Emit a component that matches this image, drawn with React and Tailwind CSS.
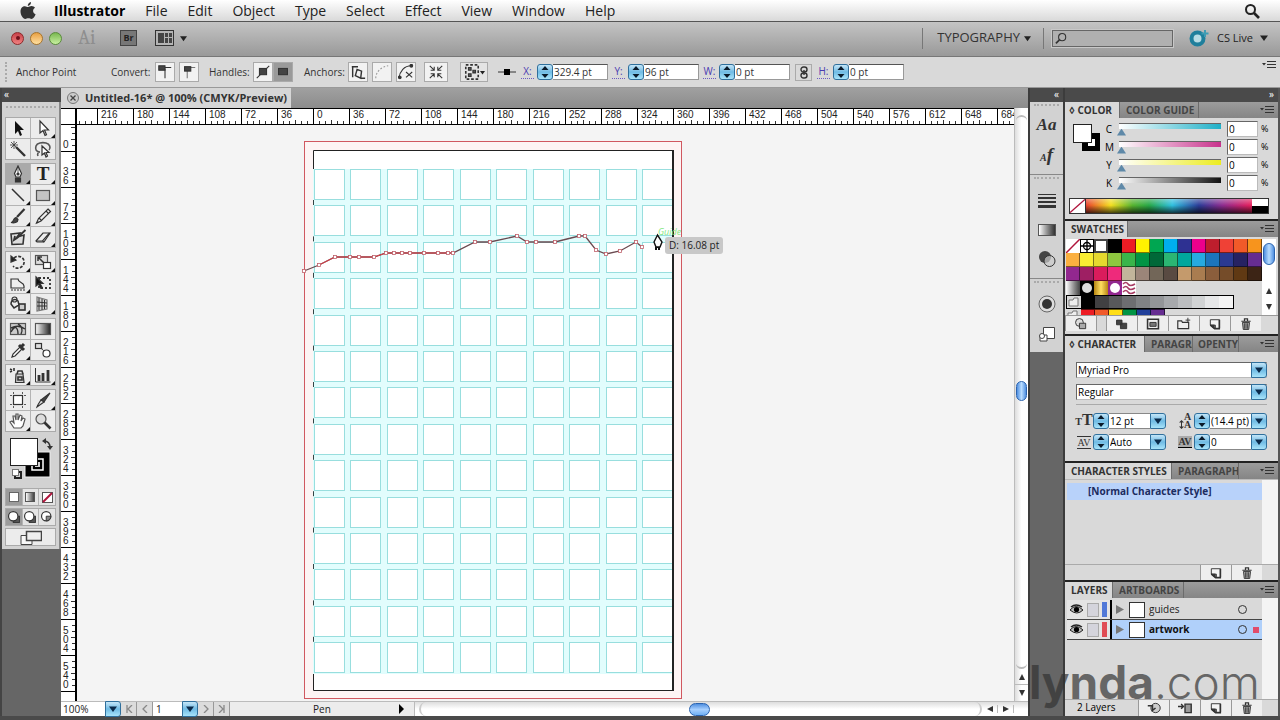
import React, { useState } from "react";

const menus = ["File", "Edit", "Object", "Type", "Select", "Effect", "View", "Window", "Help"];

const hRuler = [216, 180, 144, 108, 72, 36, 0, 36, 72, 108, 144, 180, 216, 252, 288, 324, 360, 396, 432, 468, 504, 540, 576, 612, 648, 684];
const vRuler = ["36", "72", "108", "144", "180", "216", "252", "288", "324", "360", "396", "432", "468", "504", "540"];

const gridCols = Array.from({ length: 10 }, (_, i) => Math.round(236.5 + i * 36.5));
const gridRows = Array.from({ length: 14 }, (_, i) => Math.round(44 + i * 36.4));

const anchors = [
  [227, 146], [242, 140], [258, 132], [273, 132], [282, 132], [297, 132], [309, 128], [317, 128], [325, 128],
  [333, 128], [347, 128], [361, 128], [371, 128], [376, 128], [398, 117], [413, 117], [440, 111], [450, 117],
  [459, 117], [478, 117], [502, 111], [508, 111], [519, 125], [529, 129], [543, 126], [559, 117], [565, 122],
];

const swatches = [
  "bg-black", "bg-[#ed1c24]", "bg-[#fff200]", "bg-[#00a651]", "bg-[#00aeef]", "bg-[#2e3192]", "bg-[#ec008c]",
  "bg-[#be1e2d]", "bg-[#ef4136]", "bg-[#f15a29]", "bg-[#f7941d]",
  "bg-[#fbb040]", "bg-[#f9ed32]", "bg-[#e6d92e]", "bg-[#8dc63f]", "bg-[#39b54a]", "bg-[#009444]", "bg-[#006838]",
  "bg-[#2bb673]", "bg-[#00a79d]", "bg-[#27aae1]", "bg-[#1c75bc]", "bg-[#2b3990]", "bg-[#262262]", "bg-[#662d91]",
  "bg-[#92278f]", "bg-[#9e1f63]", "bg-[#da1c5c]", "bg-[#ee2a7b]", "bg-[#c2b59b]", "bg-[#9b8579]", "bg-[#726658]",
  "bg-[#594a42]", "bg-[#c49a6c]", "bg-[#a97c50]", "bg-[#8b5e3c]", "bg-[#754c29]", "bg-[#603913]", "bg-[#3c2415]",
];

const grays = [
  "bg-black", "bg-[#414042]", "bg-[#58595b]", "bg-[#6d6e71]", "bg-[#808285]", "bg-[#939598]", "bg-[#a7a9ac]",
  "bg-[#bcbec0]", "bg-[#d1d3d4]", "bg-[#e6e7e8]", "bg-[#f4f4f4]",
];

const brights = ["bg-[#ed1c24]", "bg-[#f15a29]", "bg-[#ffde17]", "bg-[#009444]", "bg-[#21409a]", "bg-[#662d91]"];

const channels = [
  { name: "C", track: "bg-[linear-gradient(to_right,#fff,#1fb0c8)]" },
  { name: "M", track: "bg-[linear-gradient(to_right,#fff,#c8328c)]" },
  { name: "Y", track: "bg-[linear-gradient(to_right,#fff,#ecec20)]" },
  { name: "K", track: "bg-[linear-gradient(to_right,#fff,#111)]" },
];

/* ---------- icons ---------- */

const Icon = ({ size = 18, children }) => (
  <svg width={size} height={size} viewBox="0 0 18 18" fill="none" stroke="#333" strokeWidth="1.2" aria-hidden="true">
    {children}
  </svg>
);

const Down = ({ size = 7, color = "#222" }) => (
  <svg width={size} height={size} viewBox="0 0 8 8" fill={color} aria-hidden="true">
    <path d="M0 1.5h8L4 7z" />
  </svg>
);

const NewIcon = () => (
  <Icon size={14}>
    <path d="M3 3.500h12v11H9.500v-4H3z" fill="#f4f4f4" />
    <path d="M3 10.500l5.500 4.500H14.500V4" strokeWidth="2" />
    <path d="M3 10.500h5v4z" fill="#333" />
  </Icon>
);

const TrashIcon = () => (
  <Icon size={14}>
    <path d="M4.500 7h9l-1 9h-7z" fill="#aaa" />
    <path d="M3 5.500h12M7 5V2.500h4V5M7.500 8v7M10.500 8v7" strokeWidth="1.500" />
  </Icon>
);

const tools = {
  selection: <path d="M6 2v13l3-3 2 5 2-1-2-5h4z" fill="#111" stroke="none" />,
  direct: <path d="M6 2v12l3-2.500 2 5 1.500-.8-2-4.700h4z" fill="#fff" />,
  wand: (
    <>
      <path d="M7 7l9 9" strokeWidth="2.400" />
      <path d="M5 1v8M1 5h8M2 2l6 6M8 2L2 8" strokeWidth=".8" />
    </>
  ),
  lasso: (
    <>
      <path d="M6 12c-4 0-5-3-4-6s6-4 10-3 5 5 3 7M6 12c-2 0-3 2-2 4" strokeWidth="1.600" stroke="#555" />
      <path d="M8 6v9l2.500-2 1.500 4 1.500-1-1.500-3.500h3z" fill="#fff" />
    </>
  ),
  pen: (
    <>
      <path d="M9 1L5.500 8.500 7 12h4l1.500-3.500z" fill="#fff" />
      <path d="M9 2v6" strokeWidth=".8" />
      <path d="M6.500 13h5v4h-5z" fill="#333" />
      <circle cx="9" cy="9" r="1" fill="#333" />
    </>
  ),
  line: <path d="M3 3l12 12" strokeWidth="1.500" />,
  rect: <rect x="2.500" y="4.500" width="13" height="10" fill="#c4c4c4" stroke="#555" />,
  brush: (
    <>
      <path d="M15.500 2L8 10" strokeWidth="2.200" />
      <path d="M2 15.500c3 0 1.500-4 5-5l2 2c0 3-4 4-7 3z" fill="#444" />
    </>
  ),
  pencil: (
    <>
      <path d="M14 2l2.500 2.500L7 14l-4.500 2L4.500 11.500z" fill="#eee" />
      <path d="M2.500 16l2-1M5 11l2.500 2.500M12 4l2.500 2.500" />
    </>
  ),
  blob: (
    <>
      <path d="M2 6l9-1-3 4 7-2-1 9-11 .500z" fill="#ddd" strokeWidth="1.600" />
      <path d="M16.500 2L8 10l-3 2 1-4" strokeWidth="1.800" />
    </>
  ),
  eraser: (
    <>
      <path d="M2 13l7-8 7 0-6 9H3z" fill="#eee" />
      <path d="M2 13h6.500l7-8M8.500 13l1.500 1" />
    </>
  ),
  rotate: (
    <>
      <path d="M5 5c5-4 11 0 10 5s-7 7-11 3" strokeDasharray="3 1.500" strokeWidth="1.600" />
      <path d="M2 3v6l5-2z" fill="#222" />
    </>
  ),
  scale: (
    <>
      <rect x="1.500" y="2.500" width="12" height="9" fill="#ddd" stroke="#555" />
      <rect x="9.500" y="9.500" width="7" height="6" fill="#fff" />
      <path d="M4 4l6 6M4 8V4h4" strokeWidth="1.500" />
    </>
  ),
  warp: (
    <>
      <path d="M2 14V5h7c0 4 6 3 6 7v2z" fill="#eee" />
      <path d="M2 16h14" strokeDasharray="2 1" />
    </>
  ),
  transform: (
    <>
      <rect x="5" y="4" width="11" height="10" strokeDasharray="2 2" strokeWidth="1.800" />
      <path d="M2 3v9l2.500-2 2 4 1.500-1-2-3.500h3z" fill="#111" />
    </>
  ),
  shape: (
    <>
      <path d="M2 9c0-4 4-6 7-3l1 4-5 3z" fill="#eee" strokeWidth="1.500" />
      <circle cx="5.500" cy="4.500" r="2.500" />
      <rect x="10" y="9" width="6" height="6" fill="#ccc" strokeWidth="1.600" />
    </>
  ),
  perspective: (
    <>
      <path d="M3 2l10 3v9L3 16z" fill="#d0d0d0" stroke="#777" />
      <path d="M5 3v12M8 4v11M10.500 5v9M3 7l10 1M3 11h10" strokeWidth="1" />
    </>
  ),
  mesh: (
    <>
      <rect x="1.500" y="3.500" width="15" height="11" fill="#ccc" stroke="#555" />
      <path d="M2 12c4-8 7-4 7 2M9 4c4 2 5 6 3 10M2 8c6-3 10-2 14 1" strokeWidth="1.400" />
    </>
  ),
  gradient: <rect x="1.500" y="3.500" width="15" height="11" fill="url(#toolGradient)" stroke="#555" />,
  eyedropper: (
    <>
      <path d="M3 16l1-3 7-7 2 2-7 7z" fill="#fff" />
      <path d="M10 4l5 5M12 6l3-3" strokeWidth="3" />
    </>
  ),
  blend: (
    <>
      <rect x="1.500" y="2.500" width="6" height="5" fill="#ddd" />
      <path d="M8 8l3 3" strokeDasharray="1 1" />
      <circle cx="12.500" cy="12.500" r="3.500" fill="#fff" />
    </>
  ),
  sprayer: (
    <>
      <path d="M7 8h7l1 8.500H6.500z" fill="#ccc" />
      <path d="M8 8l1-3h4l1 3M1 3l2 1M1 6l2-1M5 2v3M9 11h4v3H9z" strokeWidth="1.600" />
    </>
  ),
  graph: (
    <>
      <path d="M1.500 2v14h15" strokeWidth="1" />
      <path d="M5 15V9M9 15V7M14 15V4" strokeWidth="2.800" />
    </>
  ),
  artboard: (
    <>
      <rect x="4.500" y="4.500" width="9" height="9" fill="#fff" />
      <path d="M1 4.500h2M15 4.500h2M1 13.500h2M15 13.500h2M4.500 1v2M13.500 1v2M4.500 15v2M13.500 15v2" strokeWidth=".8" />
    </>
  ),
  slice: (
    <>
      <path d="M16 2L7 9l3 2z" fill="#444" />
      <path d="M7 9l3 2-7 5c1-3 2-4 4-7z" fill="#ddd" />
    </>
  ),
  hand: <path d="M5 16l-4-6 2-1 2 2-1-7 2 0 1 4V2h2v6l2-5 2 1-1 5 2-3 2 1-2 7-2 2z" fill="#fff" stroke="#555" />,
  zoom: (
    <>
      <circle cx="7" cy="7" r="5" fill="#ddd" stroke="#555" />
      <path d="M10.500 10.500l6 6" strokeWidth="2.600" />
    </>
  ),
};

const toolGroups = [
  ["selection", "direct", "wand", "lasso"],
  ["pen", "type", "line", "rect", "brush", "pencil", "blob", "eraser"],
  ["rotate", "scale", "warp", "transform", "shape", "perspective"],
  ["mesh", "gradient", "eyedropper", "blend"],
  ["sprayer", "graph"],
  ["artboard", "slice", "hand", "zoom"],
];

const noFlyout = ["selection", "wand", "lasso", "blob", "transform", "mesh", "gradient", "blend", "artboard", "zoom"];

/* ---------- small controls ---------- */

const Stepper = ({ label }) => (
  <button
    aria-label={label}
    className="flex h-4 w-4 shrink-0 items-center justify-center rounded-[3px] border border-[#2f6f9c] bg-linear-to-b from-[#c4e6f8] via-[#6fbbe4] to-[#a8e4fa]"
  >
    <svg width="8" height="12" viewBox="0 0 8 12" fill="#0a1a2a">
      <path d="M4 0l3.500 4h-7zM4 12l3.500-4h-7z" />
    </svg>
  </button>
);

const DropButton = ({ label }) => (
  <button
    aria-label={label}
    className="flex h-4 w-4 shrink-0 items-center justify-center rounded-r-[3px] border border-[#2f6f9c] bg-linear-to-b from-[#c4e6f8] via-[#6fbbe4] to-[#a8e4fa]"
  >
    <Down size={8} color="#0a2a4a" />
  </button>
);

const Field = ({ id, label, value }) => (
  <div className="flex items-center">
    <label htmlFor={id} className="mr-[3px] w-[13px] border-b border-dotted border-[#6b5bc4] text-center leading-[13px] text-[#4b3bb0]">
      {label}
    </label>
    <Stepper label={`Step ${label}`} />
    <input
      id={id}
      defaultValue={value}
      className="h-4 w-[55px] border border-[#999] border-t-[#555] border-l-0 bg-white px-px outline-none"
    />
  </div>
);

const BarButton = ({ label, active, children }) => (
  <button
    aria-label={label}
    className={
      "flex h-5 w-5 shrink-0 items-center justify-center border border-[#aaa] " +
      (active ? "bg-[#9a9a9a]" : "bg-[#f2f2f2]")
    }
  >
    <Icon size={16}>{children}</Icon>
  </button>
);

const PanelMenu = () => (
  <button aria-label="Panel menu" className="flex items-center pr-1">
    <svg width="14" height="10" viewBox="0 0 14 10" fill="#333">
      <path d="M0 3h4L2 5.500zM5 1h9v1H5zM5 4h9v1H5zM5 7h9v1H5z" />
    </svg>
  </button>
);

const Tabs = ({ tabs }) => (
  <div className="flex h-4 shrink-0 justify-between bg-linear-to-b from-[#9c9c9c] to-[#858585] text-[10px] leading-4 font-bold">
    <div className="flex min-w-0">
      {tabs.map((tab, i) => (
        <button
          key={tab.name}
          className={
            "overflow-hidden border-r border-[#6c6c6c] text-left font-bold whitespace-nowrap " +
            tab.width +
            (i === 0 ? " bg-[#d9d9d9] text-[#333]" : " text-[#444]")
          }
        >
          {tab.name}
        </button>
      ))}
    </div>
    <PanelMenu />
  </div>
);

const FootButton = ({ label, children }) => (
  <button aria-label={label} className="flex h-full w-[31px] items-center justify-center border-l border-[#999] bg-[#eeeeee]">
    {children}
  </button>
);

const Arrow = ({ d }) => (
  <svg width="8" height="8" viewBox="0 0 8 8" fill="#333" aria-hidden="true">
    <path d={d} />
  </svg>
);
const UP = "M4 1l3 6H1z";
const DOWN = "M4 7l3-6H1z";
const LEFT = "M1 4l6-3v6z";
const RIGHT = "M7 4L1 1v6z";

const Grip = () => <div className="mx-1 h-1 border-b-2 border-dotted border-[#aaa]" />;

/* ---------- top bars ---------- */

const MenuBar = () => (
  <nav className="flex h-[22px] shrink-0 items-center border-b border-[#555] bg-linear-to-b from-white to-[#d9d9d9] pr-5 pl-5 text-sm text-[#222]">
    <svg width="16" height="18" viewBox="0 0 16 18" fill="#333" aria-hidden="true">
      <path d="M11 0c.2 2-1.300 3.800-3.200 4C7.500 2.200 9 .4 11 0zM8 5c1 0 2-1 3.600-1 1.400 0 2.700.7 3.400 1.800-2.800 1.700-2.300 5.400.6 6.500C14.800 14.500 13.200 17 11.500 17c-1.200 0-1.600-.7-3.100-.7s-2 .7-3.100.7C3 17 .5 13 .5 9.500.5 6 2.700 4.200 4.900 4.200 6.300 4.200 7.200 5 8 5z" />
    </svg>
    <a href="#app" className="ml-[18px] font-bold text-black">Illustrator</a>
    <div className="ml-5 flex gap-5">
      {menus.map((m) => (
        <a key={m} href={"#" + m.toLowerCase()}>{m}</a>
      ))}
    </div>
    <button aria-label="Spotlight" className="ml-auto">
      <svg width="16" height="16" viewBox="0 0 16 16" fill="none" stroke="#222" strokeWidth="2">
        <circle cx="6.500" cy="6.500" r="4.500" />
        <path d="M10 10l5 5" strokeWidth="2.600" />
      </svg>
    </button>
  </nav>
);

const TitleBar = () => (
  <header className="flex h-[35px] shrink-0 items-center border-b border-[#777] bg-linear-to-b from-[#c4c4c4] to-[#999] pr-3 pb-[2px] pl-[11px]">
    <div className="flex gap-[6px]">
      <button aria-label="Close" className="flex h-[13px] w-[13px] items-center justify-center rounded-full border border-[#8c2a2a] bg-linear-to-b from-[#c8404a] to-[#f08080]">
        <span className="h-1 w-1 rounded-full bg-[#70101a]" />
      </button>
      <button aria-label="Minimize" className="h-[13px] w-[13px] rounded-full border border-[#a8742c] bg-linear-to-b from-[#e8a040] to-[#ffe0a0]" />
      <button aria-label="Zoom window" className="h-[13px] w-[13px] rounded-full border border-[#5a8c3c] bg-linear-to-b from-[#7ab850] to-[#c8f0a0]" />
    </div>
    <span className="ml-4 w-[22px] font-serif text-xl leading-5 text-[#8e8e8e]">Ai</span>
    <button aria-label="Bridge" className="ml-[20px] flex h-4 w-[17px] items-center justify-center border border-[#444] bg-[#777] text-[9px] leading-3 font-bold text-[#222]">
      Br
    </button>
    <button aria-label="Arrange documents" className="ml-[18px] flex items-center gap-[6px]">
      <svg width="19" height="16" viewBox="0 0 19 16">
        <rect x=".5" y=".5" width="18" height="15" fill="#b4b4b4" stroke="#333" />
        <path d="M3 3h6v10H3zM10 3h3v4h-3zM14 3h3v4h-3zM10 8h3v5h-3zM14 8h3v5h-3z" fill="#444" />
      </svg>
      <Down />
    </button>
    <div className="ml-auto flex items-center">
      <span className="h-[21px] border-l border-[#777]" />
      <button className="ml-[14px] flex items-center gap-1 text-[13px] text-[#333]">
        TYPOGRAPHY <Down />
      </button>
      <span className="ml-3 h-[21px] border-l border-[#777]" />
      <div className="ml-2 flex h-[17px] w-[121px] items-center border border-[#666] bg-[#b0b0b0] pl-[2px] ring-1 ring-[#c8c8c8]">
        <svg width="13" height="13" viewBox="0 0 13 13" fill="none" stroke="#333" strokeWidth="1.200">
          <circle cx="8" cy="5" r="4" />
          <path d="M5 8l-4 4" strokeWidth="1.800" />
        </svg>
        <input aria-label="Search" className="w-full bg-transparent px-1 text-[10px] outline-none" />
      </div>
      <svg className="ml-4" width="20" height="18" viewBox="0 0 20 18" fill="none">
        <circle cx="8.500" cy="9.500" r="6" fill="#b8dce4" stroke="#1f7f9c" strokeWidth="4" />
        <path d="M16 1v7M12.500 4.500h7" stroke="#3f9cb4" strokeWidth="2" />
      </svg>
      <button className="ml-2 flex items-center gap-[7px] text-[11px] text-[#222]">
        CS Live <Down size={8} />
      </button>
    </div>
  </header>
);

const ControlBar = () => (
  <section aria-label="Control" className="flex h-[31px] shrink-0 items-center border-b border-[#999] bg-[#d9d9d9] text-[10px] text-[#333]">
    <div className="ml-[5px] h-[20px] border-l-2 border-dotted border-[#aaa]" />
    <span className="ml-[9px] w-[95px]">Anchor Point</span>
    <span className="w-[44px]">Convert:</span>
    <div className="flex gap-1">
      <BarButton label="Convert to corner">
        <path d="M3 4h6M9 4h7M9 5v11" />
        <rect x="2" y="2" width="7" height="5" fill="#444" />
      </BarButton>
      <BarButton label="Convert to smooth">
        <path d="M7 6v10M8 4h8" stroke="#777" />
        <rect x="4" y="3" width="7" height="5" fill="#444" />
      </BarButton>
    </div>
    <span className="ml-[10px] w-[44px]">Handles:</span>
    <div className="flex">
      <BarButton label="Show handles">
        <path d="M2 16L16 2" />
        <rect x="5" y="5" width="8" height="7" fill="#444" />
      </BarButton>
      <BarButton label="Hide handles" active>
        <rect x="4" y="5" width="10" height="7" fill="#444" />
      </BarButton>
    </div>
    <span className="ml-[11px] w-[44px]">Anchors:</span>
    <div className="flex gap-1">
      <BarButton label="Remove anchor">
        <path d="M2 3h7M3 3v12M8 6l-2 7 6 3 1-8zM12 16h5" strokeWidth="1.600" />
      </BarButton>
      <BarButton label="Connect anchors">
        <path d="M2 16c0-7 6-13 14-14" stroke="#999" strokeDasharray="2 2" />
      </BarButton>
      <BarButton label="Cut path">
        <path d="M1 16C2 8 7 2 15 2M9 9l7 6M16 9l-7 6" />
        <circle cx="2" cy="15" r="1.500" fill="#333" />
        <circle cx="15" cy="2" r="1.500" fill="#333" />
      </BarButton>
    </div>
    <button aria-label="Isolate" className="ml-2 flex h-5 w-[24px] items-center justify-center border border-[#aaa] bg-[#f2f2f2]">
      <Icon size={16}>
        <path d="M2 2l5 5M7 3v4H3M16 2l-5 5M11 3v4h4M2 16l5-5M3 11h4v4M16 16l-5-5M15 11h-4v4" />
      </Icon>
    </button>
    <button aria-label="Select similar" className="ml-3 flex h-5 w-[28px] items-center justify-center border border-[#aaa] bg-[#e4e4e4]">
      <Icon size={16}>
        <rect x="2" y="1" width="14" height="16" strokeDasharray="3 2" strokeWidth="1.800" />
        <path d="M5 4h3v3H5zM10 7h3v3h-3zM5 11h3v3H5z" fill="#555" />
      </Icon>
      <Down size={5} />
    </button>
    <svg className="ml-[9px]" width="20" height="8" viewBox="0 0 20 8" aria-hidden="true">
      <path d="M1 4h18" stroke="#333" />
      <rect x="7" y="1" width="6" height="6" fill="#000" />
    </svg>
    <div className="ml-1 flex items-center">
      <div className="flex gap-1">
        <Field id="x" label="X:" value="329.4 pt" />
        <Field id="y" label="Y:" value="96 pt" />
        <Field id="w" label="W:" value="0 pt" />
      </div>
      <button aria-label="Constrain proportions" className="mx-[5px] flex h-[17px] w-[17px] items-center justify-center border border-[#aaa]">
        <svg width="8" height="13" viewBox="0 0 8 13" fill="none" stroke="#333" strokeWidth="1.400">
          <rect x="1" y="1" width="6" height="5" rx="2.500" />
          <rect x="1" y="7" width="6" height="5" rx="2.500" />
          <path d="M4 4v5" />
        </svg>
      </button>
      <Field id="h" label="H:" value="0 pt" />
    </div>
    <div className="ml-auto flex h-full items-start pt-[3px]">
      <PanelMenu />
    </div>
  </section>
);

/* ---------- toolbox ---------- */

const Toolbox = () => {
  const [tool, setTool] = useState("pen");
  return (
    <aside className="w-[61px] shrink-0 border-l-2 border-[#444] bg-[#666]">
      <div className="h-[14px] bg-[#4a4a4a] pl-[2px] text-[10px] leading-3 text-white">«</div>
      <div className="flex h-[447px] flex-col items-center bg-[#d2d2d2] border-r-2 border-[#888]">
        <div className="h-[6px] w-[50px] shrink-0 border-b-2 border-dotted border-[#aaa]" />
        <div className="mt-[9px] flex flex-col gap-[3px]">
          {toolGroups.map((group) => (
            <div key={group[0]} className="grid w-[51px] grid-cols-2 gap-px border border-[#aaa] bg-[#b4b4b4]">
              {group.map((name) => (
                <button
                  key={name}
                  aria-label={name}
                  onClick={() => setTool(name)}
                  className={
                    "relative flex h-5 items-center justify-center " +
                    (tool === name ? "bg-[#aaaaaa]" : "bg-[#ececec]")
                  }
                >
                  {name === "type" ? (
                    <span className="font-['Liberation_Serif',serif] text-[19px] leading-5 font-bold text-[#222]">T</span>
                  ) : (
                    <Icon>{tools[name]}</Icon>
                  )}
                  {!noFlyout.includes(name) && (
                    <svg className="absolute right-0 bottom-0" width="4" height="4" viewBox="0 0 4 4">
                      <path d="M4 0v4H0z" fill="#111" />
                    </svg>
                  )}
                </button>
              ))}
            </div>
          ))}
        </div>
        <svg className="mt-1 shrink-0" width="48" height="51" viewBox="0 0 48 51" aria-label="Fill and stroke">
          <rect x="18" y="16" width="25" height="25" fill="#000" stroke="#eee" />
          <path d="M25 23h11v11H25z" fill="none" stroke="#fff" strokeWidth="1.500" />
          <rect x="28" y="26" width="5" height="5" fill="#d2d2d2" />
          <rect x="3.500" y="2.500" width="27" height="27" fill="#fff" stroke="#222" />
          <path d="M37 5c4 0 6 2 6 7" fill="none" stroke="#333" strokeWidth="1.500" />
          <path d="M35 5l4-3v6zM43 14l-3-4h6z" fill="#333" />
          <rect x="8" y="36" width="6" height="6" fill="none" stroke="#222" strokeWidth="2" />
          <rect x="5.500" y="33.500" width="6" height="6" fill="#fff" stroke="#777" />
        </svg>
        <div className="mt-px grid w-[51px] grid-cols-3 gap-px border border-[#aaa] bg-[#b4b4b4]">
          <button aria-label="Color" className="flex h-4 items-center justify-center bg-[#9c9c9c]">
            <span className="h-[10px] w-[10px] border border-[#666] bg-white" />
          </button>
          <button aria-label="Gradient fill" className="flex h-4 items-center justify-center bg-[#e4e4e4]">
            <span className="h-[10px] w-[10px] border border-[#555] bg-linear-to-r from-white to-[#444]" />
          </button>
          <button aria-label="None" className="flex h-4 items-center justify-center bg-[#e4e4e4]">
            <svg width="11" height="11" viewBox="0 0 11 11">
              <rect x=".5" y=".5" width="10" height="10" fill="#fff" stroke="#555" />
              <path d="M1 10l9-9" stroke="#b0143c" strokeWidth="2" />
            </svg>
          </button>
        </div>
        <div className="mt-[2px] grid w-[51px] grid-cols-3 gap-px border border-[#aaa] bg-[#b4b4b4]">
          {["Draw normal", "Draw behind", "Draw inside"].map((name, i) => (
            <button
              key={name}
              aria-label={name}
              className={"flex h-4 items-center justify-center " + (i === 0 ? "bg-[#9c9c9c]" : "bg-[#e4e4e4]")}
            >
              <Icon size={14}>
                {i < 2 && <rect x="8" y="8" width="8" height="8" fill="#555" />}
                <circle cx="8" cy="8" r="6" fill="#fff" strokeWidth="1.500" />
                {i === 2 && <path d="M8 8h6a6 6 0 0 1-6 6z" fill="#888" />}
              </Icon>
            </button>
          ))}
        </div>
        <button aria-label="Screen mode" className="mt-[2px] flex h-[18px] w-[51px] items-center justify-center border border-[#aaa] bg-[#ececec]">
          <svg width="22" height="15" viewBox="0 0 22 15" fill="#f8f8f8" stroke="#444">
            <path d="M1 5.500h11v9H1z" />
            <path d="M6.500 1.500h15v9h-15z" fill="#eee" strokeWidth="1.500" />
          </svg>
        </button>
      </div>
    </aside>
  );
};

/* ---------- document window ---------- */

const HorizontalRuler = () => (
  <div className="flex h-[17px] shrink-0 overflow-hidden border-t border-b border-black bg-white font-['Liberation_Sans',sans-serif] text-[10px] text-[#222]">
    <div className="w-4 shrink-0 border-r-2 border-black" />
    <div className="flex w-5 shrink-0 items-end">
      <svg width="20" height="4">
        <path d="M2.500 1v3M8.500 1v3M14.500 1v3" stroke="#333" />
      </svg>
    </div>
    {hRuler.map((n, i) => (
      <div key={i} className="flex w-9 shrink-0 flex-col justify-between border-l border-black">
        <span className="pl-[3px] leading-[11px]">{n}</span>
        <svg width="35" height="4" className="shrink-0">
          <path d="M5.500 1v3M11.500 1v3M17.500 0v4M23.500 1v3M29.500 1v3" stroke="#333" />
        </svg>
      </div>
    ))}
  </div>
);

const VerticalRuler = () => (
  <div className="flex w-4 shrink-0 flex-col overflow-hidden border-r-2 border-black bg-white font-['Liberation_Sans',sans-serif] text-[10px] text-[#222]">
    <div className="flex h-[27px] shrink-0 items-end justify-between border-b border-black">
      <span className="pb-[2px] pl-[2px] leading-[9px]">0</span>
      <svg width="4" height="26">
        <path d="M0 2.500h4M0 14.500h4M1 8.500h3M1 20.500h3" stroke="#333" />
      </svg>
    </div>
    {vRuler.map((n) => (
      <div key={n} className="flex h-9 shrink-0 items-end justify-between border-b border-black">
        <span className="w-[8px] pb-[2px] pl-[2px] leading-[9px] break-all whitespace-normal">{n}</span>
        <svg width="4" height="35" className="shrink-0">
          <path d="M1 5.500h3M1 11.500h3M0 17.500h4M1 23.500h3M1 29.500h3" stroke="#333" />
        </svg>
      </div>
    ))}
  </div>
);

const Canvas = () => (
  <div className="relative min-w-0 flex-1 overflow-hidden bg-[#f4f4f4]">
    <svg className="block h-full w-full" fill="none">
      <rect x="227.500" y="16.500" width="377" height="557" fill="#fdf4f4" stroke="#d05860" />
      <rect x="236" y="25" width="360" height="541" fill="#fff" />
      <rect x="236" y="44" width="360" height="505" fill="#e2fdfd" />
      {gridRows.map((y) =>
        gridCols.map((x) => (
          <rect key={x + "-" + y} x={x + 0.5} y={y + 0.5} width="30" height="30" fill="#fff" stroke="#98dede" />
        ))
      )}
      <path d="M236.500 44V25.500H595.500V565.500H236.500V549" stroke="#222" />
      <path d="M596 25v541" stroke="#222" strokeWidth="2" />
      <path d="M236.500 75v470" stroke="#344" strokeDasharray="5 31.400" />
      <polyline points={anchors.map((p) => p.join(",")).join(" ")} stroke="#6a4a50" strokeWidth="1.300" />
      <polyline points={anchors.slice(1, 14).map((p) => p.join(",")).join(" ")} stroke="#e03c46" strokeWidth="1" />
      {anchors.map(([x, y]) => (
        <rect key={x} x={x - 1.5} y={y - 1.5} width="3" height="3" fill="#fff" stroke="#c0606a" strokeWidth=".8" />
      ))}
      <path d="M580.500 110l-3.500 7 2 5h4l2-5z" fill="#fff" stroke="#111" strokeWidth="1.400" />
      <path d="M578 122h5v3h-2v-2h-1v2h-2z" fill="#111" />
    </svg>
    <span className="absolute top-[101px] left-[581px] text-[9px] leading-[11px] text-[#84e884] italic">Guide</span>
    <div className="absolute top-[112px] left-[588px] rounded-[3px] bg-[#c8c8c8] px-1 text-[10px] leading-[17px] text-[#222]">
      D: 16.08 pt
    </div>
  </div>
);

const VerticalScroll = () => (
  <div className="flex w-[14px] shrink-0 flex-col border-l border-[#bbb] bg-linear-to-r from-[#ddd] via-white to-white">
    <div className="h-1/2 pt-[7px]">
      <div className="mx-px h-2 rounded-t-full border-t-2 border-[#bbb]" />
    </div>
    <div className="flex flex-1 flex-col">
      <div className="mx-px -mt-6 h-5 rounded-full border border-[#2c64b0] bg-linear-to-r from-[#4f8fe0] via-[#b8dcff] to-[#4f8fe0]" />
      <div className="mx-px mt-auto h-2 rounded-b-full border-b-2 border-[#bbb]" />
    </div>
    <button aria-label="Scroll up" className="flex h-4 items-center justify-center border-b border-[#bbb]"><Arrow d={UP} /></button>
    <button aria-label="Scroll down" className="flex h-4 items-center justify-center"><Arrow d={DOWN} /></button>
  </div>
);

const NavButton = ({ label, d }) => (
  <button aria-label={label} className="flex h-full w-4 items-center justify-center border-r border-[#999] bg-[#dcdcdc]">
    <svg width="8" height="8" viewBox="0 0 8 8" fill="none" stroke="#888" strokeWidth="1.300">
      <path d={d} />
    </svg>
  </button>
);

const StatusBar = () => (
  <div className="flex h-[15px] shrink-0 items-center border-t border-[#bbb] bg-[#ececec] text-[10px] text-[#222]">
    <input aria-label="Zoom level" defaultValue="100%" className="h-full w-11 bg-white px-[2px] outline-none" />
    <DropButton label="Zoom presets" />
    <NavButton label="First artboard" d="M2 0v8M7 0L3 4l4 4" />
    <NavButton label="Previous artboard" d="M6 0L2 4l4 4" />
    <input aria-label="Artboard" defaultValue="1" className="h-full w-[29px] bg-white px-[3px] outline-none" />
    <DropButton label="Choose artboard" />
    <NavButton label="Next artboard" d="M2 0l4 4-4 4" />
    <NavButton label="Last artboard" d="M1 0l4 4-4 4M6 0v8" />
    <span className="ml-[83px] w-[83px]">Pen</span>
    <svg width="10" height="10" viewBox="0 0 10 10"><path d="M3 0l5 5-5 5z" /></svg>
    <div className="ml-2 flex h-full min-w-0 flex-1 items-center border-l border-[#bbb] bg-linear-to-b from-[#ddd] via-white to-white pl-1">
      <div className="flex h-full flex-1 items-center rounded-full border-x-2 border-[#ccc]">
        <div className="ml-[48%] h-[13px] w-[21px] rounded-full border border-[#2c64b0] bg-linear-to-b from-[#4f8fe0] via-[#a8d0ff] to-[#6fb0f4]" />
      </div>
      <button aria-label="Scroll left" className="flex w-4 justify-center border-r border-[#bbb]"><Arrow d={LEFT} /></button>
      <button aria-label="Scroll right" className="flex w-4 justify-center border-r border-[#bbb]"><Arrow d={RIGHT} /></button>
      <span className="w-[14px]" />
    </div>
  </div>
);

const Document = () => (
  <main className="flex min-w-0 flex-1 flex-col">
    <div className="flex h-5 shrink-0 bg-linear-to-b from-[#a0a0a0] to-[#8c8c8c] text-[11px]">
      <div className="flex w-[230px] items-center gap-[6px] bg-[#d6d6d6] pl-[6px] font-bold text-[#333]">
        <button aria-label="Close tab" className="shrink-0">
          <svg width="12" height="12" viewBox="0 0 12 12" fill="#ccc" stroke="#777">
            <circle cx="6" cy="6" r="5.500" />
            <path d="M3.500 3.500l5 5M8.500 3.500l-5 5" stroke="#444" strokeWidth="1.300" />
          </svg>
        </button>
        <span>Untitled-16* @ 100% (CMYK/Preview)</span>
      </div>
    </div>
    <div className="flex min-h-0 flex-1">
      <div className="flex min-w-0 flex-1 flex-col">
        <HorizontalRuler />
        <div className="flex min-h-0 flex-1">
          <VerticalRuler />
          <Canvas />
        </div>
      </div>
      <VerticalScroll />
    </div>
    <StatusBar />
  </main>
);

/* ---------- collapsed dock ---------- */

const Dock = () => (
  <aside className="w-[37px] shrink-0 border-x-2 border-[#3c3c3c] bg-[#666]">
    <div className="h-[14px] bg-[#4a4a4a] pr-1 text-right text-[10px] leading-3 text-white">«</div>
    <div className="flex flex-col bg-[#d2d2d2]">
      <div className="flex h-[73px] flex-col border-b border-[#888]">
        <Grip />
        <button className="mt-1 h-[30px] font-['Liberation_Serif',serif] text-[17px] font-bold text-[#333] italic">Aa</button>
        <button className="h-[30px] font-['Liberation_Serif',serif] text-[19px] font-bold text-[#333] italic">
          <span className="text-[10px]">A</span>f
        </button>
      </div>
      <div className="flex h-[104px] flex-col items-center border-b border-[#888]">
        <div className="w-full"><Grip /></div>
        <button aria-label="Stroke" className="mt-1 flex h-[34px] items-center">
          <svg width="18" height="16" viewBox="0 0 18 16" fill="#333">
            <path d="M0 2h18v1H0zM0 5h18v2H0zM0 9h18v2H0zM0 13h18v3H0z" />
          </svg>
        </button>
        <button aria-label="Gradient" className="flex h-[26px] items-center">
          <span className="h-[12px] w-[18px] border border-[#555] bg-linear-to-r from-white to-[#333]" />
        </button>
        <button aria-label="Transparency" className="flex h-[32px] items-center">
          <svg width="18" height="18" viewBox="0 0 18 18">
            <circle cx="7" cy="7" r="6" fill="#444" />
            <circle cx="11.500" cy="11" r="5.500" fill="#ccc" fillOpacity=".7" stroke="#333" />
          </svg>
        </button>
      </div>
      <div className="flex h-[73px] flex-col items-center">
        <div className="w-full"><Grip /></div>
        <button aria-label="Appearance" className="mt-[5px] flex h-[32px] items-center">
          <svg width="18" height="18" viewBox="0 0 18 18">
            <circle cx="9" cy="9" r="8" fill="#ddd" stroke="#666" />
            <circle cx="9" cy="9" r="5" fill="#333" />
          </svg>
        </button>
        <button aria-label="Graphic styles" className="flex h-[28px] items-center">
          <svg width="18" height="18" viewBox="0 0 18 18" fill="#fff" stroke="#444">
            <path d="M5.500 2.500h11v11h-11z" />
            <path d="M2 10h7v6H2z" />
            <circle cx="4" cy="11" r="2.500" />
          </svg>
        </button>
      </div>
    </div>
  </aside>
);

/* ---------- panels ---------- */

const ColorPanel = () => (
  <section aria-label="Color" className="flex h-[119px] shrink-0 flex-col border-b-2 border-[#222] bg-[#d9d9d9]">
    <Tabs tabs={[{ name: "◊ COLOR", width: "w-[55px] pl-1" }, { name: "COLOR GUIDE", width: "w-[79px] pl-[6px]" }]} />
    <div className="mt-[2px] flex pl-2">
      <svg width="30" height="34" viewBox="0 0 30 34" aria-label="Fill and stroke" className="shrink-0">
        <rect x="9" y="13" width="18" height="18" fill="#000" />
        <rect x="15" y="19" width="7" height="7" fill="#fff" />
        <rect x=".5" y="4.500" width="18" height="18" fill="#fff" stroke="#222" />
      </svg>
      <div className="ml-[2px] flex flex-col text-[10px]">
        {channels.map((c) => (
          <div key={c.name} className="flex h-[18px] items-center">
            <label htmlFor={"ch" + c.name} className="w-[8px] text-center">{c.name}</label>
            <div className="ml-1 flex w-[104px] flex-col">
              <div className={"ml-[2px] h-[6px] border-t border-[#666] " + c.track} />
              <input
                id={"ch" + c.name}
                type="range"
                defaultValue="0"
                className="h-[7px] w-full appearance-none bg-transparent [&::-webkit-slider-thumb]:h-[7px] [&::-webkit-slider-thumb]:w-[9px] [&::-webkit-slider-thumb]:appearance-none [&::-webkit-slider-thumb]:bg-[#5f89a8] [&::-webkit-slider-thumb]:[clip-path:polygon(50%_0,100%_100%,0_100%)]"
              />
            </div>
            <input
              aria-label={c.name + " value"}
              defaultValue="0"
              className="ml-[6px] h-4 w-[31px] border border-[#bbb] border-t-[#666] border-l-[#666] bg-white px-px outline-none"
            />
            <span className="ml-[3px] text-[9px]">%</span>
          </div>
        ))}
      </div>
    </div>
    <div className="mt-[6px] ml-1 flex h-4 w-[200px] border border-[#333]">
      <svg width="16" height="14" viewBox="0 0 16 14" className="shrink-0 border-r border-[#333] bg-white">
        <path d="M0 14L16 0" stroke="#b0143c" strokeWidth="1.500" />
      </svg>
      <div className="flex-1 bg-[linear-gradient(to_bottom,rgba(255,255,255,0.35),rgba(255,255,255,0)_45%,rgba(0,0,0,0.7)),linear-gradient(to_right,#e8402c,#f4e020_15%,#58b430_28%,#28a848_38%,#30c0e0_52%,#2c3c98_68%,#8c2c90_82%,#e8205c)]" />
      <div className="w-4 border-b-7 border-black bg-white" />
    </div>
  </section>
);

const SwatchesPanel = () => (
  <section aria-label="Swatches" className="flex h-[115px] shrink-0 flex-col border-b-2 border-[#222] bg-[#d9d9d9]">
    <Tabs tabs={[{ name: "SWATCHES", width: "w-[63px] pl-[6px]" }]} />
    <div className="flex h-[78px] overflow-hidden pt-[2px] pl-px">
      <div className="w-[196px] shrink-0">
        <div className="grid w-[196px] grid-cols-14">
          <svg className="h-[14px] w-[14px] bg-white"><path d="M0 14L14 0" stroke="#b0143c" strokeWidth="1.500" /></svg>
          <svg className="h-[14px] w-[14px] border border-black bg-white" viewBox="0 0 12 12" fill="none" stroke="#000" strokeWidth="1.300">
            <circle cx="6" cy="6" r="3.500" />
            <path d="M6 0v12M0 6h12" />
          </svg>
          <span className="h-[14px] border-2 border-[#444] bg-white ring-1 ring-white ring-inset" />
          {swatches.map((s, i) => (
            <span key={i} className={"h-[14px] border-r border-b border-black/50 " + s} />
          ))}
        </div>
        <div className="flex h-[14px] w-[70px]">
          <span className="w-[14px] bg-linear-to-r from-white to-[#444]" />
          <span className="flex w-[14px] items-center justify-center bg-black"><span className="h-[10px] w-[10px] rounded-full bg-[#ddd]" /></span>
          <span className="w-[14px] bg-linear-to-r from-[#b8860b] via-[#ffe060] to-[#b8860b]" />
          <span className="flex w-[14px] items-center justify-center bg-[#92278f]"><span className="h-[10px] w-[10px] rounded-full bg-white" /></span>
          <svg className="h-[14px] w-[14px] bg-white" fill="none" stroke="#a83c64" strokeWidth="1.500">
            <path d="M1 3q3-3 5 0t7 0M1 7q3-3 5 0t7 0M1 11q3-3 5 0t7 0" />
          </svg>
        </div>
        <div className="flex h-[14px] w-[168px] border border-black">
          <svg width="14" height="12" className="shrink-0"><path d="M2 4h4l1-2h4v8H2z" fill="#eee" stroke="#777" /></svg>
          {grays.map((g) => <span key={g} className={"flex-1 " + g} />)}
        </div>
        <div className="flex h-[14px]">
          <svg width="15" height="12" className="shrink-0"><path d="M2 4h4l1-2h4v8H2z" fill="#eee" stroke="#777" /></svg>
          {brights.map((b) => <span key={b} className={"w-[14px] border-t border-r border-black/60 " + b} />)}
        </div>
      </div>
      <div className="flex w-[14px] flex-col items-center bg-white">
        <div className="mt-1 h-[22px] w-3 shrink-0 rounded-full border border-[#2c64b0] bg-linear-to-r from-[#4f8fe0] via-[#b8dcff] to-[#4f8fe0]" />
        <button aria-label="Swatches up" className="mt-auto flex h-4 items-center"><Arrow d={UP} /></button>
        <button aria-label="Swatches down" className="flex h-4 items-center"><Arrow d={DOWN} /></button>
      </div>
    </div>
    <div className="flex h-4 border-t border-[#999]">
      <FootButton label="Swatch libraries"><Icon size={14}><circle cx="7" cy="7" r="5" fill="#ddd" /><path d="M7 8h8v7H7z" fill="#aaa" /></Icon></FootButton>
      <span className="w-[10px] border-l border-[#999]" />
      <FootButton label="Swatch kinds"><Icon size={14}><path d="M2 4h7v6H2zM7 8h8v7H7z" fill="#444" /></Icon></FootButton>
      <FootButton label="Swatch options"><Icon size={14}><path d="M2 3h14v12H2z" strokeWidth="2" /><path d="M5 7h8v5H5z" fill="#777" /></Icon></FootButton>
      <FootButton label="New color group"><Icon size={14}><path d="M1 5h5l1 2h8v8H1z" fill="#eee" strokeWidth="1.500" /><path d="M14 1v6M11 4h6" /></Icon></FootButton>
      <FootButton label="New swatch"><NewIcon /></FootButton>
      <FootButton label="Delete swatch"><TrashIcon /></FootButton>
    </div>
  </section>
);

const FontSelect = ({ label, value }) => (
  <div className="relative flex">
    <select
      aria-label={label}
      defaultValue={value}
      className="h-4 w-full appearance-none border border-[#bbb] border-t-[#666] border-l-[#666] bg-white pl-px text-[10px] leading-[14px] outline-none"
    >
      <option>{value}</option>
    </select>
    <span className="pointer-events-none absolute top-0 right-0 flex h-4 w-4 items-center justify-center rounded-r-[3px] border border-[#2f6f9c] bg-linear-to-b from-[#c4e6f8] via-[#6fbbe4] to-[#a8e4fa]">
      <Down size={8} color="#0a2a4a" />
    </span>
  </div>
);

const Combo = ({ label, value, icon }) => (
  <div className="flex h-4 items-center">
    <span className="flex w-[18px] justify-center">{icon}</span>
    <Stepper label={label + " step"} />
    <input aria-label={label} defaultValue={value} className="h-4 w-[41px] border-t border-b border-[#888] bg-white px-px text-[10px] outline-none" />
    <DropButton label={label + " presets"} />
  </div>
);

const serifIcon = "font-['Liberation_Serif',serif] font-bold text-[#333]";

const CharacterPanel = () => (
  <section aria-label="Character" className="flex h-[127px] shrink-0 flex-col border-b-2 border-[#222] bg-[#d9d9d9]">
    <Tabs
      tabs={[
        { name: "◊ CHARACTER", width: "w-[80px] pl-1" },
        { name: "PARAGRAPH", width: "w-[48px] pl-[6px]" },
        { name: "OPENTYPE", width: "w-[46px] pl-[5px]" },
      ]}
    />
    <div className="mr-[11px] ml-[11px] flex flex-col gap-[6px] border-b border-[#aaa] pt-[10px] pb-1">
      <FontSelect label="Font family" value="Myriad Pro" />
      <FontSelect label="Font style" value="Regular" />
    </div>
    <div className="mr-[11px] ml-[10px] flex flex-wrap justify-between gap-y-[5px] pt-2">
      <Combo label="Font size" value="12 pt" icon={<span className={serifIcon + " text-[16px] leading-4"}><span className="text-[10px]">T</span>T</span>} />
      <Combo
        label="Leading"
        value="(14.4 pt)"
        icon={
          <span className="flex items-end">
            <svg width="5" height="9" viewBox="0 0 5 9" fill="#333">
              <path d="M0 2.500L2.500 0 5 2.500H3v4h2L2.500 9 0 6.500h2v-4z" />
            </svg>
            <span className={serifIcon + " flex flex-col text-[10px] leading-[8px]"}>
              <span>A</span>
              <span>A</span>
            </span>
          </span>
        }
      />
      <Combo
        label="Kerning"
        value="Auto"
        icon={
          <span className={serifIcon + " border-t border-b border-[#333] text-[10px] leading-[11px] font-normal"}>AV</span>
        }
      />
      <Combo label="Tracking" value="0" icon={<span className={serifIcon + " border-b border-black bg-[#aaa] text-[10px] leading-[11px]"}>AV</span>} />
    </div>
  </section>
);

const StylesPanel = () => (
  <section aria-label="Character styles" className="flex h-[119px] shrink-0 flex-col border-b-2 border-[#222] bg-[#d9d9d9]">
    <Tabs
      tabs={[
        { name: "CHARACTER STYLES", width: "w-[107px] pl-[6px]" },
        { name: "PARAGRAPH STYLES", width: "w-[67px] pl-[6px]" },
      ]}
    />
    <div className="flex flex-1 border-t border-[#bbb]">
      <ul className="flex-1 pt-[3px] pl-[2px] text-[10px]">
        <li className="bg-[#b8d2fa] pl-[21px] leading-[17px] font-bold text-[#1c2c60]">[Normal Character Style]</li>
      </ul>
      <div className="w-4 bg-[#f4f4f4]" />
    </div>
    <div className="flex h-4 justify-end border-t border-[#aaa]">
      <FootButton label="New style"><NewIcon /></FootButton>
      <FootButton label="Delete style"><TrashIcon /></FootButton>
      <span className="w-4" />
    </div>
  </section>
);

const LayerRow = ({ name, color, selected }) => (
  <li className={"flex h-5 items-center border-b border-[#444] " + (selected ? "bg-[#b0d0fa]" : "bg-[#d9d9d9]")}>
    <div className="flex h-full w-[45px] shrink-0 items-center border-r-2 border-black bg-[#e4e4e4] pl-[3px]">
      <button aria-label={"Toggle " + name}>
        <svg width="13" height="11" viewBox="0 0 13 11">
          <path d="M0 6q6-7 13 0-6 6-13 0z" fill="#bbb" stroke="#222" />
          <circle cx="6.500" cy="5.500" r="2.600" fill="#000" />
          <path d="M1 3q5-4 11 0" fill="none" stroke="#222" strokeWidth="1.500" />
        </svg>
      </button>
      <span className="ml-[4px] h-[14px] w-3 border border-[#aaa] bg-[#d4d4dc]" />
      <span className={"ml-[3px] h-[15px] w-[5px] " + color} />
    </div>
    <svg className="ml-1 shrink-0" width="8" height="9" viewBox="0 0 8 9"><path d="M0 0l8 4.500L0 9z" fill="#777" /></svg>
    <span className="ml-[5px] h-4 w-4 shrink-0 border border-[#333] bg-white" />
    <span className={"ml-1 flex-1 " + (selected ? "font-bold text-[#111]" : "text-[#222]")}>{name}</span>
    <span className="h-[9px] w-[9px] rounded-full border-[1px] border-[#333]" />
    <span className={"mr-[3px] ml-[6px] h-[6px] w-[6px] " + (selected ? "bg-[#e04c6c]" : "")} />
  </li>
);

const LayersPanel = () => (
  <section aria-label="Layers" className="flex min-h-0 flex-1 flex-col bg-[#d9d9d9]">
    <Tabs tabs={[{ name: "LAYERS", width: "w-[48px] pl-[6px]" }, { name: "ARTBOARDS", width: "w-[71px] pl-[6px]" }]} />
    <div className="flex flex-1 text-[10px]">
      <ul className="flex-1 pt-[2px] pl-[2px]">
        <LayerRow name="guides" color="bg-[#5078d8]" />
        <LayerRow name="artwork" color="bg-[#e04c54]" selected />
      </ul>
      <div className="w-4 bg-[#f4f4f4]" />
    </div>
    <div className="flex h-[17px] border-t border-[#aaa] text-[10px]">
      <span className="ml-3 flex-1">2 Layers</span>
      <FootButton label="Clipping mask"><Icon size={14}><circle cx="11" cy="9" r="6" fill="#ccc" /><path d="M1 6h6v6l4-3" strokeWidth="2" /></Icon></FootButton>
      <FootButton label="New sublayer"><Icon size={14}><path d="M0 7h6M4 4l3 3-3 3" strokeWidth="1.800" /><path d="M9 4h8v11H9z" fill="#999" strokeWidth="1.800" /></Icon></FootButton>
      <FootButton label="New layer"><NewIcon /></FootButton>
      <FootButton label="Delete layer"><TrashIcon /></FootButton>
      <span className="w-4" />
    </div>
  </section>
);

const App = () => {
  return (
    <div className="relative flex h-screen flex-col overflow-hidden bg-[#4a4a4a] font-['Open_Sans','Noto_Sans',sans-serif] whitespace-nowrap">
      <svg width="0" height="0" className="absolute">
        <linearGradient id="toolGradient">
          <stop offset="0" stopColor="#fff" />
          <stop offset="1" stopColor="#222" />
        </linearGradient>
      </svg>
      <MenuBar />
      <TitleBar />
      <ControlBar />
      <div className="flex min-h-0 flex-1 pb-1">
        <Toolbox />
        <Document />
        <Dock />
        <div className="flex w-[215px] shrink-0 flex-col border-r-2 border-[#555]">
          <div className="h-[14px] shrink-0 bg-[#4a4a4a] pr-1 text-right text-[10px] leading-3 text-white">»</div>
          <ColorPanel />
          <SwatchesPanel />
          <CharacterPanel />
          <StylesPanel />
          <LayersPanel />
        </div>
      </div>
      <div className="pointer-events-none absolute right-5 bottom-4 font-['Inter',sans-serif] text-[46px] leading-[44px] text-[#333]/70">
        <span className="font-bold">lynda</span><span className="font-light">.com</span>
      </div>
    </div>
  );
};

export default App;
